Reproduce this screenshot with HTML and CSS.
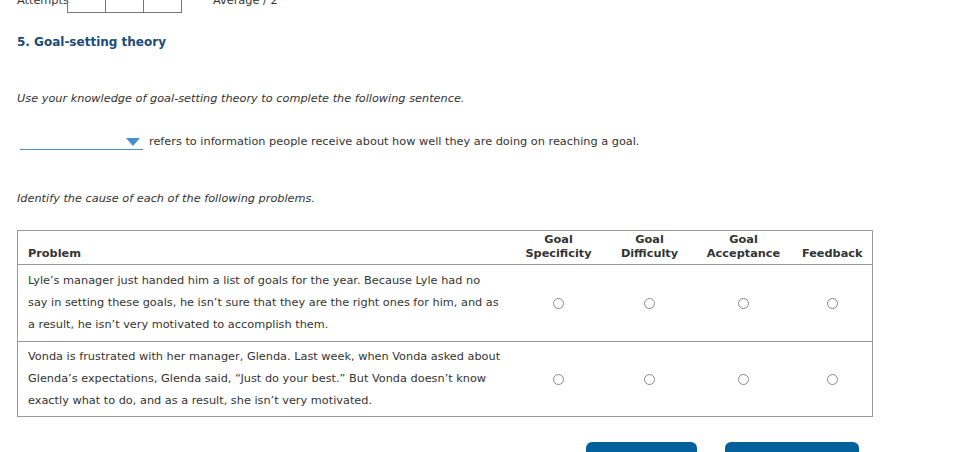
FILE: index.html
```html
<!DOCTYPE html>
<html>
<head>
<meta charset="utf-8">
<link rel="stylesheet" href="styles.css">
</head>
<body>
<div class="page">
  <div class="attempts">
    <span class="att-label">Attempts</span>
    <div class="att-boxes"><span class="box"></span><span class="box"></span><span class="box"></span></div>
    <span class="avg">Average / 2</span>
  </div>
  <h2 class="title">5. Goal-setting theory</h2>
  <p class="instr">Use your knowledge of goal-setting theory to complete the following sentence.</p>
  <div class="sentence">
    <span class="dropdown"><span class="tri"></span></span>
    <span class="stext">refers to information people receive about how well they are doing on reaching a goal.</span>
  </div>
  <p class="instr instr2">Identify the cause of each of the following problems.</p>
  <table class="grid">
    <colgroup>
      <col class="c-prob"><col class="c1"><col class="c2"><col class="c3"><col class="c4">
    </colgroup>
    <thead>
      <tr>
        <th class="prob">Problem</th>
        <th>Goal<br>Specificity</th>
        <th>Goal<br>Difficulty</th>
        <th>Goal<br>Acceptance</th>
        <th>Feedback</th>
      </tr>
    </thead>
    <tbody>
      <tr class="r1">
        <td class="prob">Lyle’s manager just handed him a list of goals for the year. Because Lyle had no say in setting these goals, he isn’t sure that they are the right ones for him, and as a result, he isn’t very motivated to accomplish them.</td>
        <td class="rc"><span class="radio"></span></td>
        <td class="rc"><span class="radio"></span></td>
        <td class="rc"><span class="radio"></span></td>
        <td class="rc"><span class="radio"></span></td>
      </tr>
      <tr class="r2">
        <td class="prob">Vonda is frustrated with her manager, Glenda. Last week, when Vonda asked about Glenda’s expectations, Glenda said, “Just do your best.” But Vonda doesn’t know exactly what to do, and as a result, she isn’t very motivated.</td>
        <td class="rc"><span class="radio"></span></td>
        <td class="rc"><span class="radio"></span></td>
        <td class="rc"><span class="radio"></span></td>
        <td class="rc"><span class="radio"></span></td>
      </tr>
    </tbody>
  </table>
  <div class="buttons">
    <span class="btn b1"></span>
    <span class="btn b2"></span>
  </div>
</div>
</body>
</html>
```
FILE: styles.css
```css
html, body {
  margin: 0;
  padding: 0;
  background: #fff;
}
body {
  font-family: "DejaVu Sans", Verdana, sans-serif;
  font-size: 11.3px;
  color: #333;
  overflow: hidden;
}
.page {
  padding-left: 17px;
  width: 855px;
}
.attempts {
  display: flex;
  align-items: flex-end;
  height: 13px;
  overflow: visible;
}
.att-label {
  line-height: 13px;
  padding-bottom: 6px;
  margin-right: 0;
  width: 50px;
}
.att-boxes {
  display: flex;
  height: 20px;
  border: 1px solid #777;
  border-top: none;
}
.box {
  width: 37px;
  border-left: 1px solid #777;
}
.box:first-child { border-left: none; }
.avg {
  margin-left: 31px;
  line-height: 13px;
  padding-bottom: 6px;
}
.title {
  margin: 22px 0 0 0;
  font-size: 12px;
  font-weight: bold;
  color: #1b4b78;
  line-height: 15px;
}
.instr {
  font-style: italic;
  margin: 41px 0 0 0;
  line-height: 15px;
}
.sentence {
  display: flex;
  align-items: flex-end;
  margin-top: 27px;
  height: 17px;
}
.dropdown {
  position: relative;
  width: 123px;
  height: 16px;
  margin-left: 3px;
  border-bottom: 1px solid #4a90c8;
}
.tri {
  position: absolute;
  right: 3px;
  top: 5px;
  width: 0;
  height: 0;
  border-left: 7px solid transparent;
  border-right: 7px solid transparent;
  border-top: 8px solid #4a8fc8;
}
.stext {
  margin-left: 6px;
  line-height: 15px;
  padding-bottom: 1px;
}
.instr2 {
  margin-top: 41px;
}
.grid {
  margin-top: 24px;
  width: 855px;
  border-collapse: collapse;
  table-layout: fixed;
  border: 1px solid #999;
}
.c-prob { width: 495px; }
.c1 { width: 92px; }
.c2 { width: 90px; }
.c3 { width: 98px; }
.c4 { width: 80px; }
.grid th {
  font-weight: bold;
  text-align: center;
  vertical-align: bottom;
  padding: 0 0 3px 0;
  height: 30px;
  line-height: 14px;
  border-bottom: 1px solid #999;
  color: #333;
}
.grid th.prob {
  text-align: left;
  padding-left: 10px;
}
.grid td.prob {
  padding: 5px 10px 5px 10px;
  line-height: 22px;
  vertical-align: middle;
}
.grid tr.r2 td.prob {
  padding: 4px 10px 4px 10px;
}
.grid tr.r1 td { border-bottom: 1px solid #999; }
.rc {
  text-align: center;
  vertical-align: middle;
}
.radio {
  display: inline-block;
  width: 9px;
  height: 9px;
  border: 1px solid #888;
  border-radius: 50%;
  vertical-align: middle;
}
.buttons {
  display: flex;
  margin-top: 25px;
  padding-left: 569px;
  gap: 28px;
}
.btn {
  display: block;
  height: 20px;
  background: #02609a;
  border-radius: 6px 6px 0 0;
}
.b1 { width: 111px; }
.b2 { width: 134px; }
```
